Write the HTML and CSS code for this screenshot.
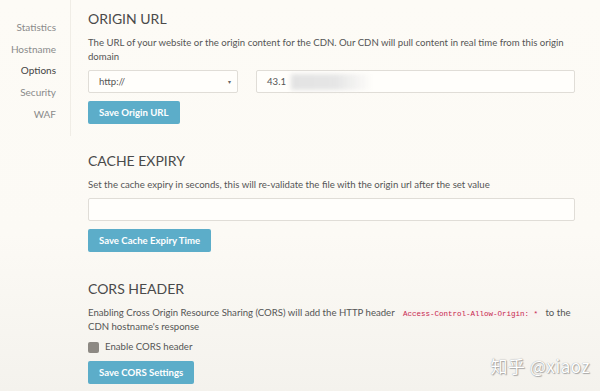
FILE: index.html
```html
<!DOCTYPE html>
<html lang="en">
<head>
    <meta charset="UTF-8">
    <meta name="viewport" content="width=device-width, initial-scale=1.0">
    <title>CDN Hostname Options</title>
    <link rel="stylesheet" href="styles.css">
</head>
<body>

    <div class="layout">
        <nav class="sidebar">
            <a href="#">Statistics</a>
            <a href="#">Hostname</a>
            <a href="#" class="active">Options</a>
            <a href="#">Security</a>
            <a href="#">WAF</a>
        </nav>

        <div class="content">
            <section class="block">
                <h2>Origin URL</h2>
                <p>The URL of your website or the origin content for the CDN. Our CDN will pull content in real time from this origin domain</p>
                <div class="origin-row">
                    <div class="select">
                        <span>http://</span>
                        <span class="caret">&#9662;</span>
                    </div>
                    <div class="field origin-host">
                        <span>43.1</span>
                        <span class="blurred"></span>
                    </div>
                </div>
                <button class="btn">Save Origin URL</button>
            </section>

            <section class="block">
                <h2>Cache Expiry</h2>
                <p>Set the cache expiry in seconds, this will re-validate the file with the origin url after the set value</p>
                <div class="field"></div>
                <button class="btn">Save Cache Expiry Time</button>
            </section>

            <section class="block">
                <h2>CORS Header</h2>
                <p>Enabling Cross Origin Resource Sharing (CORS) will add the HTTP header <code>Access-Control-Allow-Origin: *</code> to the CDN hostname's response</p>
                <label class="check">
                    <span class="box"></span>
                    Enable CORS header
                </label>
                <button class="btn btn-last">Save CORS Settings</button>
            </section>
        </div>
    </div>

    <div class="watermark">知乎 @xiaoz</div>

</body>
</html>
```

FILE: styles.css
```css
html {
    overflow: hidden;
}
body {
    font-family: 'Lato', 'Noto Sans', sans-serif;
    background: linear-gradient(#fdfbf6 0%, #fcfaf5 60%, #f4f2ed 100%);
    margin: 0;
    padding: 0;
    height: 391px;
    overflow: hidden;
    color: #555;
}
.layout {
    display: flex;
    align-items: flex-start;
}
.sidebar {
    width: 56px;
    padding: 17px 14px 10px 0;
    border-right: 1px solid #f0ede6;
    display: flex;
    flex-direction: column;
    align-items: flex-end;
}
.sidebar a {
    font-size: 10px;
    line-height: 21.7px;
    color: #8a8a8a;
    text-decoration: none;
}
.sidebar a.active {
    color: #444;
}
.content {
    width: 487px;
    padding-left: 17px;
}
.block {
    margin-bottom: 28px;
}
.block:last-child {
    margin-bottom: 0;
}
h2 {
    font-size: 14px;
    font-weight: normal;
    text-transform: uppercase;
    line-height: 18px;
    color: #4a4a4a;
    margin: 10px 0 8px;
}
.block + .block h2 {
    margin-top: 0;
}
p {
    font-size: 9.6px;
    line-height: 14px;
    margin: 0 0 6px;
    color: #555;
}
code {
    font-family: 'Liberation Mono', monospace;
    font-size: 7.5px;
    line-height: 10px;
    color: #c7254e;
    background-color: #f9f2f0;
    padding: 0 2px;
    margin: 0 3px 0 4px;
    border-radius: 2px;
}
.origin-row {
    display: flex;
    gap: 18px;
}
.select, .field {
    box-sizing: border-box;
    height: 23px;
    border: 1px solid #e0ddd7;
    border-radius: 2px;
    background-color: #fffefb;
    font-size: 9.6px;
    color: #555;
    display: flex;
    align-items: center;
    padding: 0 10px;
}
.select {
    width: 150px;
    justify-content: space-between;
    padding-right: 6px;
}
.caret {
    font-size: 6px;
    color: #666;
}
.origin-host {
    flex: 1;
    position: relative;
}
.blurred {
    position: absolute;
    left: 34px;
    top: 3px;
    width: 82px;
    height: 16px;
    background: linear-gradient(90deg, #e3e3e3 0%, #e6e6e6 55%, rgba(240, 240, 240, 0) 100%);
    filter: blur(2px);
}
.btn {
    margin-top: 8px;
    height: 23px;
    padding: 0 11px;
    background-color: #5cadc9;
    color: white;
    font-family: inherit;
    font-size: 9.6px;
    font-weight: bold;
    border: none;
    border-radius: 2px;
    cursor: pointer;
}
.btn-last {
    margin-top: 7px;
}
.check {
    display: flex;
    align-items: center;
    gap: 6px;
    font-size: 9.6px;
    line-height: 14px;
    color: #555;
    margin-top: 4px;
}
.box {
    width: 11px;
    height: 11px;
    background-color: #8d8983;
    border-radius: 2px;
}
.watermark {
    position: absolute;
    right: 10px;
    bottom: 13px;
    font-family: 'Noto Sans CJK SC', 'Liberation Sans', sans-serif;
    font-size: 17px;
    letter-spacing: 0.5px;
    color: #fff;
    text-shadow: 0 0 1px #888, 1px 1px 1px #aaa;
}
```
